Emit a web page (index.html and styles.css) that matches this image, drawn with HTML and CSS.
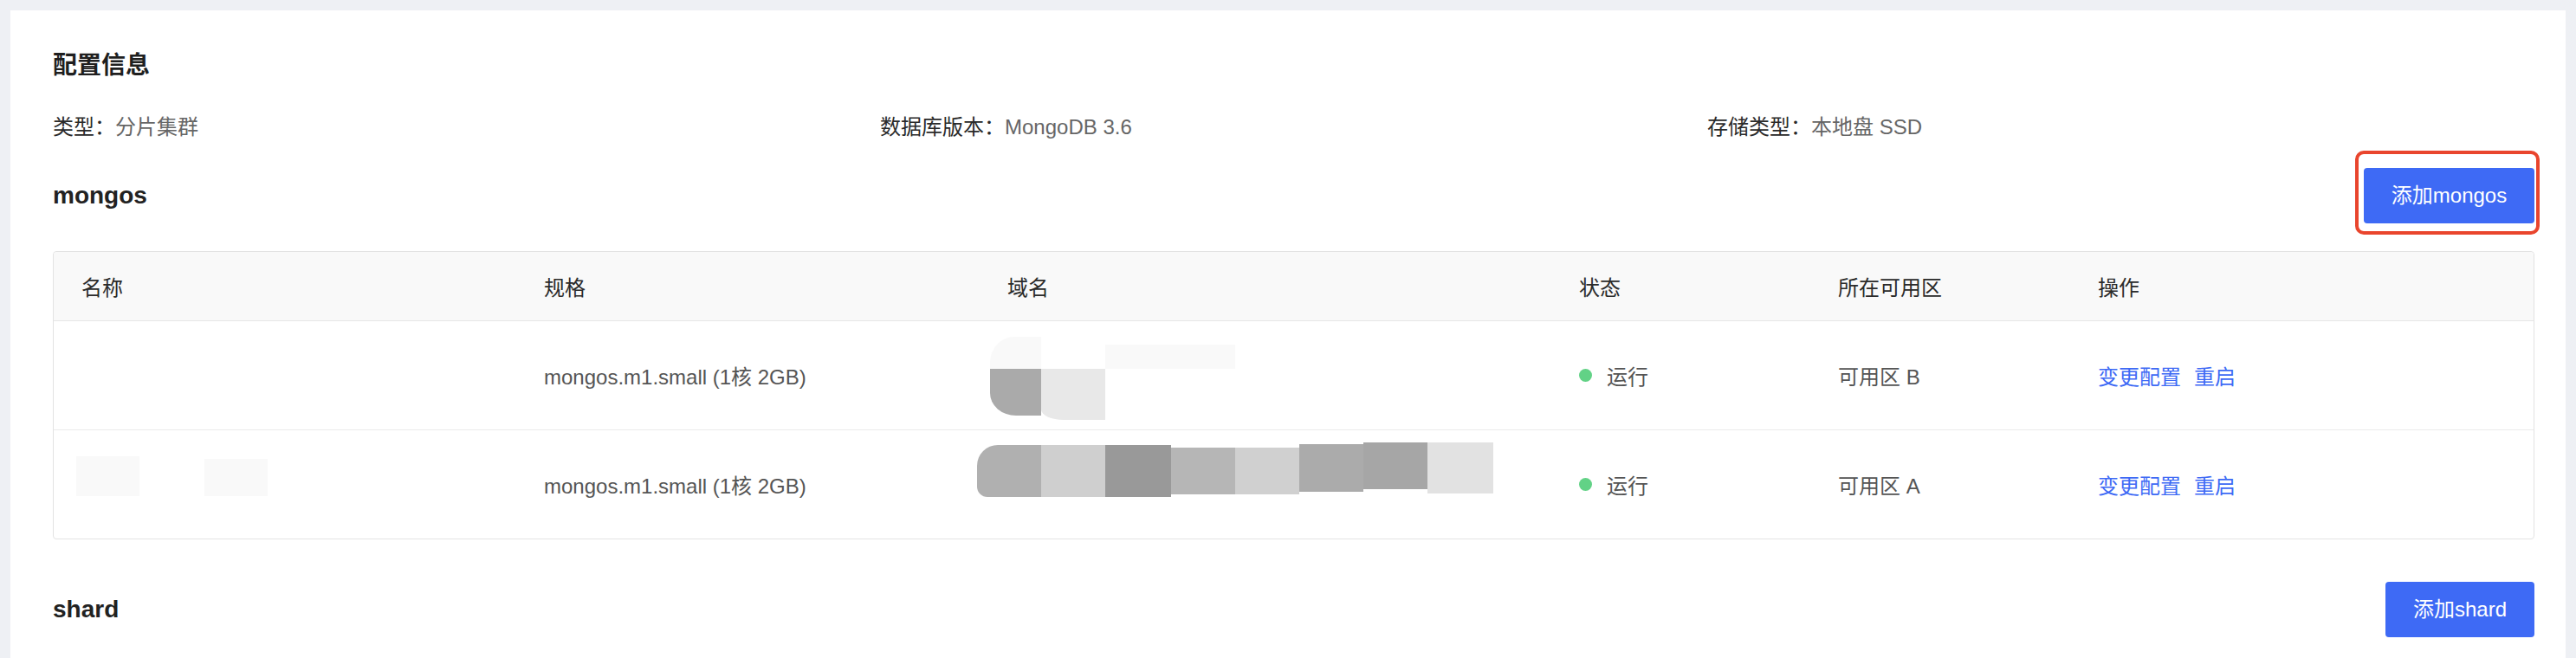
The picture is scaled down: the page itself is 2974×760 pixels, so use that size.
FILE: index.html
```html
<!DOCTYPE html>
<html lang="zh-CN">
<head>
<meta charset="utf-8">
<title>配置信息</title>
<link rel="stylesheet" href="styles.css">
</head>
<body>
<div class="page">
  <div class="card">
    <h2 class="title">配置信息</h2>
    <div class="info">
      <div class="info-item"><span class="label">类型：</span><span class="value">分片集群</span></div>
      <div class="info-item"><span class="label">数据库版本：</span><span class="value">MongoDB 3.6</span></div>
      <div class="info-item"><span class="label">存储类型：</span><span class="value">本地盘 SSD</span></div>
    </div>

    <div class="section-head">
      <h3 class="section-title">mongos</h3>
      <span class="annotated"><button class="btn btn-mongos">添加mongos</button></span>
    </div>

    <div class="table">
      <div class="tr th">
        <div class="td">名称</div>
        <div class="td">规格</div>
        <div class="td">域名</div>
        <div class="td">状态</div>
        <div class="td">所在可用区</div>
        <div class="td">操作</div>
      </div>
      <div class="tr">
        <div class="td"></div>
        <div class="td">mongos.m1.small (1核 2GB)</div>
        <div class="td">
          <div class="mosaic mosaic-1">
            <div class="mcol"><i class="mb a1"></i><i class="mb a2"></i></div>
            <div class="mcol"><i class="mb a3"></i><i class="mb a4"></i></div>
            <div class="mcol"><i class="mb a5"></i></div>
          </div>
        </div>
        <div class="td"><span class="dot"></span>运行</div>
        <div class="td">可用区 B</div>
        <div class="td"><a class="link">变更配置</a><a class="link">重启</a></div>
      </div>
      <div class="tr">
        <div class="td">
          <div class="mosaic mosaic-name">
            <i class="mb n1"></i><i class="mb n2"></i>
          </div>
        </div>
        <div class="td">mongos.m1.small (1核 2GB)</div>
        <div class="td">
          <div class="mosaic mosaic-2">
            <i class="mb b1"></i><i class="mb b2"></i><i class="mb b3"></i><i class="mb b4"></i><i class="mb b5"></i><i class="mb b6"></i><i class="mb b7"></i><i class="mb b8"></i>
          </div>
        </div>
        <div class="td"><span class="dot"></span>运行</div>
        <div class="td">可用区 A</div>
        <div class="td"><a class="link">变更配置</a><a class="link">重启</a></div>
      </div>
    </div>

    <div class="section-head shard-head">
      <h3 class="section-title">shard</h3>
      <button class="btn btn-shard">添加shard</button>
    </div>
  </div>
</div>
</body>
</html>
```

FILE: styles.css
```css
html, body {
  margin: 0;
  padding: 0;
  background: #eef0f4;
  font-family: "Liberation Sans", "Noto Sans CJK SC", sans-serif;
}

.page {
  padding: 12px 12px 0 12px;
  height: 748px;
  overflow: hidden;
}

.card {
  background: #ffffff;
  padding: 44px 36px 80px 49px;
  min-height: 800px;
  box-sizing: border-box;
}

.title {
  margin: 0;
  font-size: 28px;
  line-height: 40px;
  font-weight: 700;
  color: #1f1f1f;
}

.info {
  margin-top: 35px;
  display: grid;
  grid-template-columns: 1fr 1fr 1fr;
  font-size: 24px;
  line-height: 32px;
}

.label {
  color: #2a2a2a;
}

.value {
  color: #666666;
}

.section-head {
  margin-top: 31px;
  height: 64px;
  display: flex;
  align-items: center;
  justify-content: space-between;
}

.shard-head {
  margin-top: 49px;
}

.section-title {
  margin: 0;
  font-size: 28px;
  font-weight: 700;
  color: #222222;
  line-height: 40px;
}

.btn {
  height: 64px;
  padding: 0 32px;
  border: none;
  border-radius: 4px;
  background: #3e6af5;
  color: #ffffff;
  font-family: "Liberation Sans", "Noto Sans CJK SC", sans-serif;
  font-size: 24px;
  line-height: 64px;
}

.btn-mongos {
  width: 197px;
  padding: 0;
}

.btn-shard {
  width: 172px;
  padding: 0;
}

.annotated {
  position: relative;
  display: inline-flex;
}

.annotated::after {
  content: "";
  position: absolute;
  left: -10px;
  right: -6px;
  top: -20px;
  bottom: -13px;
  border: 4px solid #e9452d;
  border-radius: 10px;
}

.table {
  margin-top: 32px;
  border: 1px solid #e3e3e3;
  border-radius: 4px;
  font-size: 24px;
  color: #555555;
}

.tr {
  display: grid;
  grid-template-columns: 534fr 535fr 660fr 299fr 300fr 535fr;
  height: 126px;
  border-bottom: 1px solid #ebebeb;
  box-sizing: border-box;
}

.tr:last-child {
  border-bottom: none;
  height: 125px;
}

.th {
  height: 80px;
  background: #f9f9f9;
  color: #2b2b2b;
  border-bottom: 1px solid #e6e6e6;
  border-radius: 4px 4px 0 0;
}

.td {
  display: flex;
  align-items: center;
  padding: 0 32px;
  white-space: nowrap;
}

.dot {
  width: 15px;
  height: 15px;
  border-radius: 50%;
  background: #62d286;
  margin-right: 17px;
}

.link {
  color: #3e6af5;
  margin-right: 15px;
  cursor: pointer;
}

/* redaction mosaics */
.mosaic {
  display: flex;
  align-self: flex-start;
}

.mcol {
  display: flex;
  flex-direction: column;
}

.mb {
  display: block;
}

.mosaic-1 {
  margin-top: 18px;
  margin-left: -20px;
}

.a1 { width: 59px; height: 37px; background: #f9f9f9; border-top-left-radius: 28px 30px; }
.a2 { width: 59px; height: 54px; background: #aaaaaa; border-bottom-left-radius: 30px 26px; }
.a3 { width: 74px; height: 37px; }
.a4 { width: 74px; height: 59px; background: #e8e8e8; border-bottom-left-radius: 26px 12px; }
.a5 { width: 150px; height: 28px; margin-top: 9px; background: #f9f9f9; }

.mosaic-2 {
  margin-top: 14px;
  margin-left: -35px;
}

.b1 { width: 74px; height: 60px; margin-top: 3px; background: #b0b0b0; border-radius: 24px 0 0 12px; }
.b2 { width: 74px; height: 60px; margin-top: 3px; background: #cfcfcf; }
.b3 { width: 76px; height: 60px; margin-top: 3px; background: #999999; }
.b4 { width: 74px; height: 54px; margin-top: 6px; background: #b6b6b6; }
.b5 { width: 74px; height: 54px; margin-top: 6px; background: #d0d0d0; }
.b6 { width: 74px; height: 55px; margin-top: 2px; background: #ababab; }
.b7 { width: 74px; height: 54px; margin-top: 0; background: #a6a6a6; }
.b8 { width: 76px; height: 59px; margin-top: 0; background: #e2e2e2; }

.mosaic-name {
  margin-top: 30px;
  margin-left: -6px;
}

.n1 { width: 73px; height: 46px; background: #f9f9f9; }
.n2 { width: 73px; height: 43px; margin-top: 3px; margin-left: 75px; background: #f9f9f9; }
```
